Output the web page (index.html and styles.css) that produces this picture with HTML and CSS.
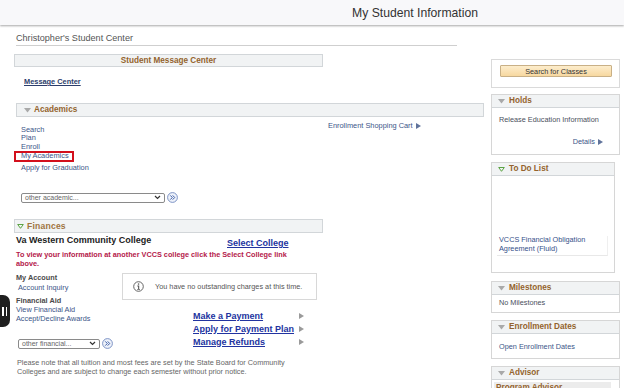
FILE: index.html
```html
<!DOCTYPE html>
<html lang="en">
<head>
<meta charset="utf-8">
<title>My Student Information</title>
<link rel="stylesheet" href="styles.css">
</head>
<body>
<header class="topbar"><h1 class="page-title">My Student Information</h1></header>
<div class="handle"><span></span><span></span></div>
<main class="main">
  <section class="left">
    <h2 class="center-title">Christopher's Student Center</h2>
    <div class="bar bar-msg">Student Message Center</div>
    <a class="msg-link">Message Center</a>

    <div class="bar bar-acad"><svg class="tri" width="7" height="5" viewBox="0 0 7 5"><path d="M0 0h7L3.5 4.6z" fill="#a9a9a9"/></svg>Academics</div>
    <div class="acad">
      <div class="acad-links">
        <a>Search</a>
        <a>Plan</a>
        <a>Enroll</a>
        <a class="hl">My Academics</a>
        <a class="grad">Apply for Graduation</a>
      </div>
      <a class="cart">Enrollment Shopping Cart <svg width="5" height="6" viewBox="0 0 5 6"><path d="M0 0l5 3-5 3z" fill="#60739b"/></svg></a>
    </div>
    <div class="select-row sel-acad">
      <div class="select w-acad"><span>other academic...</span><svg width="7" height="5" viewBox="0 0 7 5"><path d="M1 1l2.5 2.5L6 1" fill="none" stroke="#333" stroke-width="1.2"/></svg></div>
      <svg class="go" width="11" height="11" viewBox="0 0 11 11"><circle cx="5.5" cy="5.5" r="4.9" fill="#eef2fa" stroke="#7089c0" stroke-width="0.9"/><path d="M3.3 3.4l2 2.1-2 2.1M5.7 3.4l2 2.1-2 2.1" fill="none" stroke="#3d5ea8" stroke-width="1"/></svg>
    </div>

    <div class="bar bar-fin"><svg class="tri" width="7" height="5" viewBox="0 0 7 5"><path d="M0.7 0.5h5.6L3.5 4.3z" fill="none" stroke="#4b9b30" stroke-width="0.9"/></svg>Finances</div>
    <div class="college-row">
      <span class="college">Va Western Community College</span>
      <a class="select-college">Select College</a>
    </div>
    <p class="warn">To view your information at another VCCS college click the Select College link above.</p>
    <div class="fin">
      <div class="fin-left">
        <span class="lbl">My Account</span>
        <a class="acct">Account Inquiry</a>
        <span class="lbl fa">Financial Aid</span>
        <a>View Financial Aid</a>
        <a>Accept/Decline Awards</a>
        <div class="select-row sel-fin">
          <div class="select w-fin"><span>other financial...</span><svg width="7" height="5" viewBox="0 0 7 5"><path d="M1 1l2.5 2.5L6 1" fill="none" stroke="#333" stroke-width="1.2"/></svg></div>
          <svg class="go" width="11" height="11" viewBox="0 0 11 11"><circle cx="5.5" cy="5.5" r="4.9" fill="#eef2fa" stroke="#7089c0" stroke-width="0.9"/><path d="M3.3 3.4l2 2.1-2 2.1M5.7 3.4l2 2.1-2 2.1" fill="none" stroke="#3d5ea8" stroke-width="1"/></svg>
        </div>
      </div>
      <div class="fin-right">
        <div class="info">
          <svg width="11" height="11" viewBox="0 0 11 11"><circle cx="5.5" cy="5.5" r="4.8" fill="#fff" stroke="#555" stroke-width="0.9"/><rect x="4.9" y="2.4" width="1.3" height="1.3" fill="#555"/><path d="M4.3 4.6h1.9v3.4h0.8v0.8H4.2V8h0.9V5.4h-0.8z" fill="#555"/></svg>
          <span>You have no outstanding charges at this time.</span>
        </div>
        <div class="pay">
          <a><span>Make a Payment</span><svg width="5" height="6" viewBox="0 0 5 6"><path d="M0 0l5 3-5 3z" fill="#9a9a9a"/></svg></a>
          <a><span>Apply for Payment Plan</span><svg width="5" height="6" viewBox="0 0 5 6"><path d="M0 0l5 3-5 3z" fill="#9a9a9a"/></svg></a>
          <a><span>Manage Refunds</span><svg width="5" height="6" viewBox="0 0 5 6"><path d="M0 0l5 3-5 3z" fill="#9a9a9a"/></svg></a>
        </div>
      </div>
    </div>
    <p class="note">Please note that all tuition and most fees are set by the State Board for Community<br>Colleges and are subject to change each semester without prior notice.</p>
  </section>

  <aside class="right">
    <div class="search-box"><div class="btn">Search for Classes</div></div>

    <div class="panel holds">
      <div class="panel-hd"><svg width="7" height="5" viewBox="0 0 7 5"><path d="M0 0h7L3.5 4.6z" fill="#a9a9a9"/></svg>Holds</div>
      <div class="body">
        <div class="plain">Release Education Information</div>
        <a class="details">Details <svg width="5" height="6" viewBox="0 0 5 6"><path d="M0 0l5 3-5 3z" fill="#60739b"/></svg></a>
      </div>
    </div>

    <div class="panel todo">
      <div class="panel-hd"><svg width="7" height="5" viewBox="0 0 7 5"><path d="M0.7 0.5h5.6L3.5 4.3z" fill="none" stroke="#4b9b30" stroke-width="0.9"/></svg>To Do List</div>
      <div class="body">
        <a class="todo-item">VCCS Financial Obligation Agreement (Fluid)</a>
      </div>
    </div>

    <div class="panel miles">
      <div class="panel-hd"><svg width="7" height="5" viewBox="0 0 7 5"><path d="M0 0h7L3.5 4.6z" fill="#a9a9a9"/></svg>Milestones</div>
      <div class="body"><div class="plain">No Milestones</div></div>
    </div>

    <div class="panel enroll">
      <div class="panel-hd"><svg width="7" height="5" viewBox="0 0 7 5"><path d="M0 0h7L3.5 4.6z" fill="#a9a9a9"/></svg>Enrollment Dates</div>
      <div class="body"><a>Open Enrollment Dates</a></div>
    </div>

    <div class="panel advisor">
      <div class="panel-hd"><svg width="7" height="5" viewBox="0 0 7 5"><path d="M0 0h7L3.5 4.6z" fill="#a9a9a9"/></svg>Advisor</div>
      <div class="body"><div class="adv-sub">Program Advisor</div></div>
    </div>
  </aside>
</main>
</body>
</html>
```
FILE: styles.css
```css
* { box-sizing: border-box; }

html, body { margin: 0; }

body {
  font-family: "Liberation Sans", Arial, Helvetica, sans-serif;
  font-size: 7.3px;
  color: #444;
  background: #fff;
  width: 624px;
  height: 388px;
  overflow: hidden;
}

a { color: #3b5588; text-decoration: none; }

p, h1, h2 { margin: 0; }

.topbar {
  height: 25px;
  background: #f8f8fa;
  box-shadow: 0 1px 2px rgba(0, 0, 0, 0.35);
  display: flex;
  align-items: center;
  padding-left: 352px;
}

.page-title {
  font-size: 12.2px;
  font-weight: normal;
  color: #333;
  line-height: 14px;
}

.handle {
  position: absolute;
  left: 0;
  top: 295px;
  width: 10px;
  height: 32px;
  background: #1f1f1f;
  border-radius: 0 7px 7px 0;
  display: flex;
  align-items: center;
  justify-content: center;
  gap: 2px;
  padding-right: 1px;
}
.handle span { width: 1.5px; height: 9px; background: #fff; }

.main {
  display: flex;
  align-items: flex-start;
  padding-left: 14px;
}

.left { width: 470px; flex: none; }
.right { width: 129px; margin-left: 7px; margin-top: 34px; flex: none; }

.center-title {
  margin: 7px 0 0 2px;
  width: 441px;
  font-size: 9.1px;
  font-weight: normal;
  color: #555;
  line-height: 12px;
  padding-bottom: 1px;
  border-bottom: 1px solid #cfcfcf;
}

.bar {
  border: 1px solid #d2d6d9;
  background: #f1f3f4;
  font-weight: bold;
  color: #94632d;
  font-size: 8.2px;
  line-height: 12px;
  display: flex;
  align-items: center;
}
.bar-msg { margin-top: 8px; width: 309px; line-height: 11px; justify-content: center; }
.bar-acad { margin: 16px 0 0 2px; width: 468px; padding-left: 7px; gap: 3px; }
.bar-fin { margin-top: 16px; width: 309px; padding-left: 2px; gap: 3px; color: #a0753f; letter-spacing: 0.2px; font-size: 8.6px; }

.msg-link {
  display: block;
  width: max-content;
  margin: 10px 0 0 10px;
  font-weight: bold;
  font-size: 7.4px;
  line-height: 10px;
  color: #2c3d6b;
  text-decoration: underline;
}

.acad { display: flex; margin: 4px 0 0 7px; }
.acad-links {
  width: 307px;
  padding-top: 4.5px;
  display: flex;
  flex-direction: column;
  align-items: flex-start;
}
.acad-links a { line-height: 8.7px; font-size: 7.4px; }
.hl { position: relative; }
.hl::after {
  content: "";
  position: absolute;
  left: -7.5px;
  right: -5.5px;
  top: -1px;
  bottom: -1.5px;
  border: 2px solid #d3101c;
}
.grad { margin-top: 3.4px; }
.cart { display: flex; align-items: center; gap: 3px; line-height: 9px; font-size: 7.4px; height: 9px; }

.select-row { display: flex; align-items: center; gap: 2px; }
.sel-acad { margin: 19.6px 0 0 7px; }
.sel-fin { margin: 15.5px 0 0 2px; }
.select {
  height: 10px;
  border: 1px solid #8a8a8a;
  border-radius: 2px;
  background: #fff;
  display: flex;
  align-items: center;
  justify-content: space-between;
  padding: 0 3px 0 3px;
  color: #666;
  font-size: 7px;
  line-height: 8px;
}
.w-acad { width: 144px; }
.w-fin { width: 82px; }
.go { flex: none; }

.college-row { display: flex; margin: 1px 0 0 2px; height: 15px; }
.college { width: 211px; font-weight: bold; font-size: 9px; color: #222; line-height: 12px; }
.select-college {
  font-weight: bold;
  font-size: 9px;
  color: #2233a0;
  text-decoration: underline;
  line-height: 12px;
  margin-top: 3px;
}

.warn {
  margin: 0.5px 0 0 2px;
  width: 290px;
  color: #b4184a;
  font-weight: bold;
  font-size: 7.3px;
  line-height: 9px;
}

.fin { display: flex; margin: 5px 0 0 2px; }
.fin-left { width: 106px; display: flex; flex-direction: column; align-items: flex-start; }
.fin-left .lbl { font-weight: bold; color: #4a4a4a; line-height: 9px; }
.fin-left a { line-height: 9px; }
.acct { margin: 1px 0 0 2px; }
.fa { margin-top: 4px; }

.fin-right { width: 195px; margin-top: 0.5px; }
.info {
  height: 27px;
  border: 1px solid #d8d8d8;
  display: flex;
  align-items: center;
  padding-left: 10px;
  gap: 11px;
  color: #555;
}
.pay { margin: 9.5px 0 0 71px; width: 111px; }
.pay a {
  display: flex;
  justify-content: space-between;
  align-items: center;
  line-height: 13px;
  font-weight: bold;
  font-size: 9px;
  color: #2233a0;
}
.pay a span { text-decoration: underline; }

.note { margin: 9px 0 0 3px; line-height: 9px; color: #666; }

.search-box { border: 1px solid #dadada; padding: 5px 0 10px 8px; }
.btn {
  width: 112px;
  height: 12px;
  border: 1px solid #c9b086;
  border-radius: 1px;
  background: linear-gradient(#fdedcc, #f7d8a0);
  color: #333;
  font-size: 7.3px;
  display: flex;
  align-items: center;
  justify-content: center;
}

.panel { border: 1px solid #d6d6d6; margin-top: 7px; }
.panel-hd {
  background: #f1f3f4;
  border-bottom: 1px solid #d2d6d9;
  line-height: 12px;
  font-weight: bold;
  color: #94632d;
  font-size: 8.2px;
  display: flex;
  align-items: center;
  gap: 4px;
  padding-left: 6px;
}
.plain { color: #4a4f5c; line-height: 9px; }
.body a { line-height: 9px; }

.holds { margin-top: 6px; }
.holds .body { padding: 6.5px 16px 8px 7px; display: flex; flex-direction: column; }
.details { align-self: flex-end; margin-top: 13.5px; display: flex; align-items: center; gap: 3px; }

.todo { width: 124px; margin-top: 7px; }
.todo .body { padding: 0 0 16px 0; }
.todo-item {
  display: block;
  margin: 60px 6px 0 5px;
  padding: 0 0 2px 2px;
  border-bottom: 1px solid #e8e8e8;
  border-right: 1px solid #efefef;
  color: #35508a;
}
.todo .body .todo-item { line-height: 8.5px; }

.miles { margin-top: 8px; }
.miles .body { padding: 3px 0 5px 7px; }

.enroll .body { padding: 8px 0 7px 7px; }
.enroll .body a { display: block; }

.advisor .body { padding: 2px 8px 6px 2px; }
.adv-sub {
  background: #ececec;
  font-weight: bold;
  color: #94632d;
  font-size: 8.2px;
  line-height: 11px;
  padding-left: 2px;
}
```
